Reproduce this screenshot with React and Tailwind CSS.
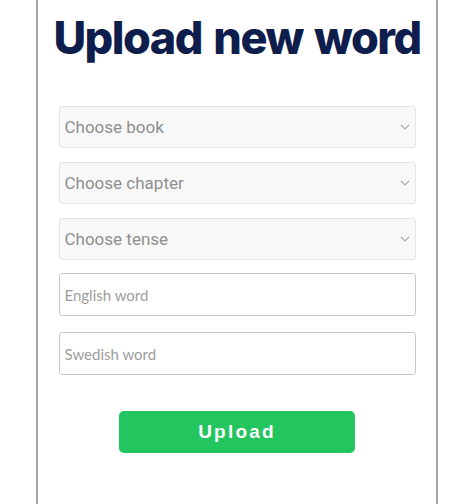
import React from "react";

function Chevron() {
  return (
    <svg width="10" height="6" viewBox="0 0 10 6" className="absolute right-[5px] top-1/2 -translate-y-1/2" fill="none">
      <path d="M1 1l4 4 4-4" stroke="#a8a8a8" strokeWidth="1.2" />
    </svg>
  );
}

function Select({ label }) {
  return (
    <div className="relative h-[42px] w-full rounded-[3px] border border-[#e3e3e3] bg-[#f8f8f8] flex items-center pl-[5px]">
      <span className="text-[17px] text-[#8f8f8f] translate-y-[1px]" style={{ fontFamily: "Roboto, sans-serif" }}>{label}</span>
      <Chevron />
    </div>
  );
}

function Input({ placeholder }) {
  return (
    <div className="h-[43px] w-full rounded-[3px] border-[1.5px] border-[#c9c9c9] bg-white flex items-center pl-[5px]">
      <span className="text-[15px] text-[#9d9d9d] translate-y-[1px]" style={{ fontFamily: "Lato, sans-serif" }}>{placeholder}</span>
    </div>
  );
}

export default function App() {
  return (
    <div className="min-h-[504px] bg-white flex justify-center">
      <div className="w-[402px] min-h-[504px] border-x-2 border-[#a6a6a6] flex flex-col items-center">
        <h1
          className="pt-[15px] text-[45px] leading-none font-extrabold text-[#0e1d4b] whitespace-nowrap tracking-[-1.5px] [word-spacing:3px]"
          style={{ fontFamily: "Inter, sans-serif" }}
        >
          Upload new word
        </h1>
        <div className="mt-[46px] w-[357px] flex flex-col">
          <div className="flex flex-col gap-[14px]">
            <Select label="Choose book" />
            <Select label="Choose chapter" />
            <Select label="Choose tense" />
          </div>
          <div className="mt-[13px] flex flex-col gap-[16px]">
            <Input placeholder="English word" />
            <Input placeholder="Swedish word" />
          </div>
        </div>
        <button
          className="mt-[36px] h-[42px] w-[236px] rounded-[5px] bg-[#22c55e] text-white font-bold text-[19px] tracking-[2.2px]"
          style={{ fontFamily: "'Liberation Sans', Arial, sans-serif" }}
        >
          Upload
        </button>
      </div>
    </div>
  );
}
